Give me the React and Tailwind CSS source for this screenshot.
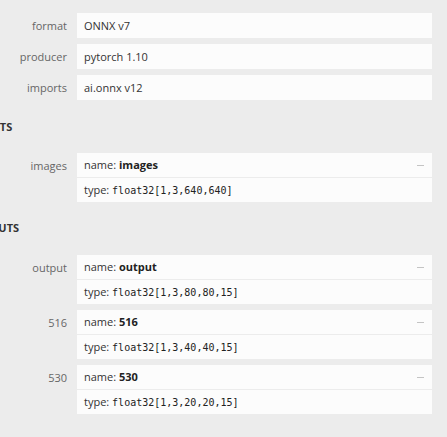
const props = [
    { label: "format", value: "ONNX v7" },
    { label: "producer", value: "pytorch 1.10" },
    { label: "imports", value: "ai.onnx v12" }
];

const inputs = [
    { label: "images", name: "images", type: "float32[1,3,640,640]" }
];

const outputs = [
    { label: "output", name: "output", type: "float32[1,3,80,80,15]" },
    { label: "516", name: "516", type: "float32[1,3,40,40,15]" },
    { label: "530", name: "530", type: "float32[1,3,20,20,15]" }
];

const Label = ({ children, h = "leading-[25px]" }) => (
    <div className={`w-[67px] shrink-0 text-right text-[11px] text-[#666] ${h}`}>
        {children}
    </div>
);

const Argument = ({ item }) => (
    <div className="flex">
        <Label h="leading-[24px] pt-px">{item.label}</Label>
        <div className="ml-[10px] w-[355px] bg-[#fcfcfc]">
            <div className="flex items-center justify-between h-[25px] pl-[7px] pr-[8px] border-b border-[#ececec]">
                <span className="text-[11px] text-[#333] pt-px">
                    name: <b className="font-bold text-[#222]">{item.name}</b>
                </span>
                <span className="block w-[7px] h-px bg-[#c4c4c4]"></span>
            </div>
            <div className="flex items-center h-[24px] pl-[7px] text-[11px] text-[#333]">
                type:&nbsp;
                <code className="text-[10px] font-['DejaVu_Sans_Mono',monospace] text-[#222]">
                    {item.type}
                </code>
            </div>
        </div>
    </div>
);

export default function App() {
    return (
        <div className="w-[447px] h-[437px] overflow-hidden bg-[#ececec] font-['Open_Sans',sans-serif]">

            {/* Model properties */}

            <div className="pt-[13px] flex flex-col gap-[6px]">
                {props.map((p) => (
                    <div key={p.label} className="flex">
                        <Label>{p.label}</Label>
                        <div className="ml-[10px] w-[355px] h-[25px] bg-[#fcfcfc] pl-[7px] text-[11px] leading-[25px] text-[#333]">
                            {p.value}
                        </div>
                    </div>
                ))}
            </div>

            {/* Inputs */}

            <div className="mt-[17px] h-[20px] leading-[20px] text-[11px] font-bold text-[#333] ml-[-28px]">
                INPUTS
            </div>

            <div className="mt-[16px] flex flex-col gap-[6px]">
                {inputs.map((i) => <Argument key={i.label} item={i} />)}
            </div>

            {/* Outputs */}

            <div className="mt-[16px] h-[20px] leading-[20px] text-[11px] font-bold text-[#333] ml-[-32px]">
                OUTPUTS
            </div>

            <div className="mt-[17px] flex flex-col gap-[6px]">
                {outputs.map((o) => <Argument key={o.label} item={o} />)}
            </div>

        </div>
    );
}
